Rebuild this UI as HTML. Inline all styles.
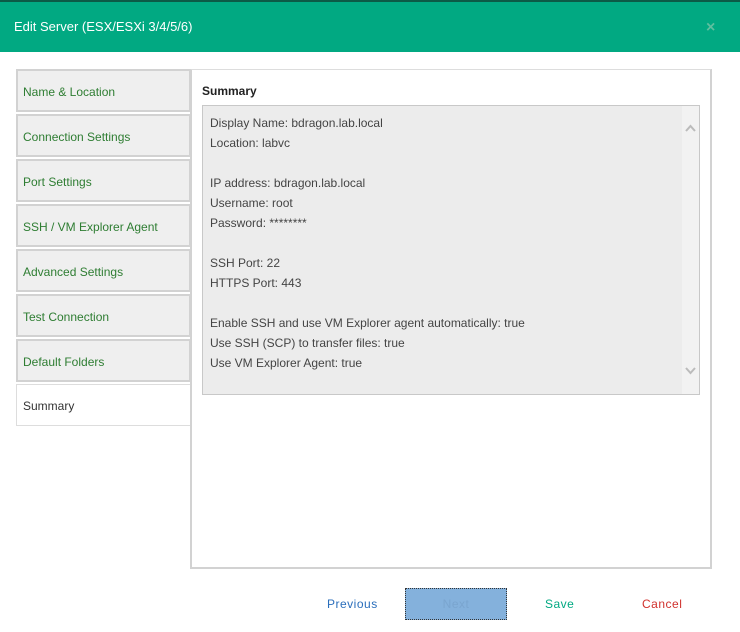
<!DOCTYPE html>
<html><head><style>
*{margin:0;padding:0;box-sizing:border-box}
body{width:740px;height:632px;background:#fff;font-family:"Liberation Sans",sans-serif;position:relative;overflow:hidden}
.hdr{position:absolute;left:0;top:0;width:740px;height:52px;background:#01a982;border-top:2px solid #0c5a46}
.hdr .t{position:absolute;left:14px;top:17px;color:#fff;font-size:13px}
.hdr .x{position:absolute;left:706px;top:17px;color:#5fbf9f;font-size:16px;font-weight:bold}
.nav{position:absolute;left:16px;width:175px;height:43px;background:#efefef;border:2px solid #d2d2d2;color:#2e7d32;font-size:12px;padding:14px 0 0 5px}
.nav.sel{background:#fff;border:1px solid #ddd;border-right:none;color:#333;padding-left:6px}
.panel{position:absolute;left:190px;top:69px;width:522px;height:500px;border:2px solid #d2d2d2;border-top:1px solid #ddd}
.st{position:absolute;left:202px;top:84px;font-size:12px;font-weight:bold;color:#222}
.ta{position:absolute;left:202px;top:105px;width:498px;height:290px;background:#ececec;border:1px solid #c8c8c8;font-size:12px;color:#444;padding:7px 0 0 7px;line-height:20px}
.sb{position:absolute;left:682px;top:106px;width:17px;height:288px;background:#f2f2f2}
.btn{position:absolute;top:597px;font-size:12px;letter-spacing:.5px}
</style></head><body>
<div class="hdr"><div class="t">Edit Server (ESX/ESXi 3/4/5/6)</div><div class="x">×</div></div>
<div class="nav" style="top:69px">Name &amp; Location</div>
<div class="nav" style="top:114px">Connection Settings</div>
<div class="nav" style="top:159px">Port Settings</div>
<div class="nav" style="top:204px">SSH / VM Explorer Agent</div>
<div class="nav" style="top:249px">Advanced Settings</div>
<div class="nav" style="top:294px">Test Connection</div>
<div class="nav" style="top:339px">Default Folders</div>
<div class="nav sel" style="top:384px;height:42px">Summary</div>
<div class="panel"></div>
<div class="st">Summary</div>
<div class="ta">Display Name: bdragon.lab.local<br>Location: labvc<br><br>IP address: bdragon.lab.local<br>Username: root<br>Password: ********<br><br>SSH Port: 22<br>HTTPS Port: 443<br><br>Enable SSH and use VM Explorer agent automatically: true<br>Use SSH (SCP) to transfer files: true<br>Use VM Explorer Agent: true</div>
<div class="sb"><svg width="17" height="288"><path d="M4 25 L8.5 20 L13 25" stroke="#bbb" stroke-width="2" fill="none"/><path d="M4 262 L8.5 267 L13 262" stroke="#bbb" stroke-width="2" fill="none"/></svg></div>
<div class="btn" style="left:327px;color:#2a6ebb">Previous</div>
<div style="position:absolute;left:405px;top:588px;width:102px;height:32px;background:#84b1dc;border:1px dotted #333;color:#7aa5cf;font-size:12px;text-align:center;line-height:30px;letter-spacing:.5px">Next</div>
<div class="btn" style="left:545px;color:#01a982">Save</div>
<div class="btn" style="left:642px;color:#d0312d">Cancel</div>
</body></html>
